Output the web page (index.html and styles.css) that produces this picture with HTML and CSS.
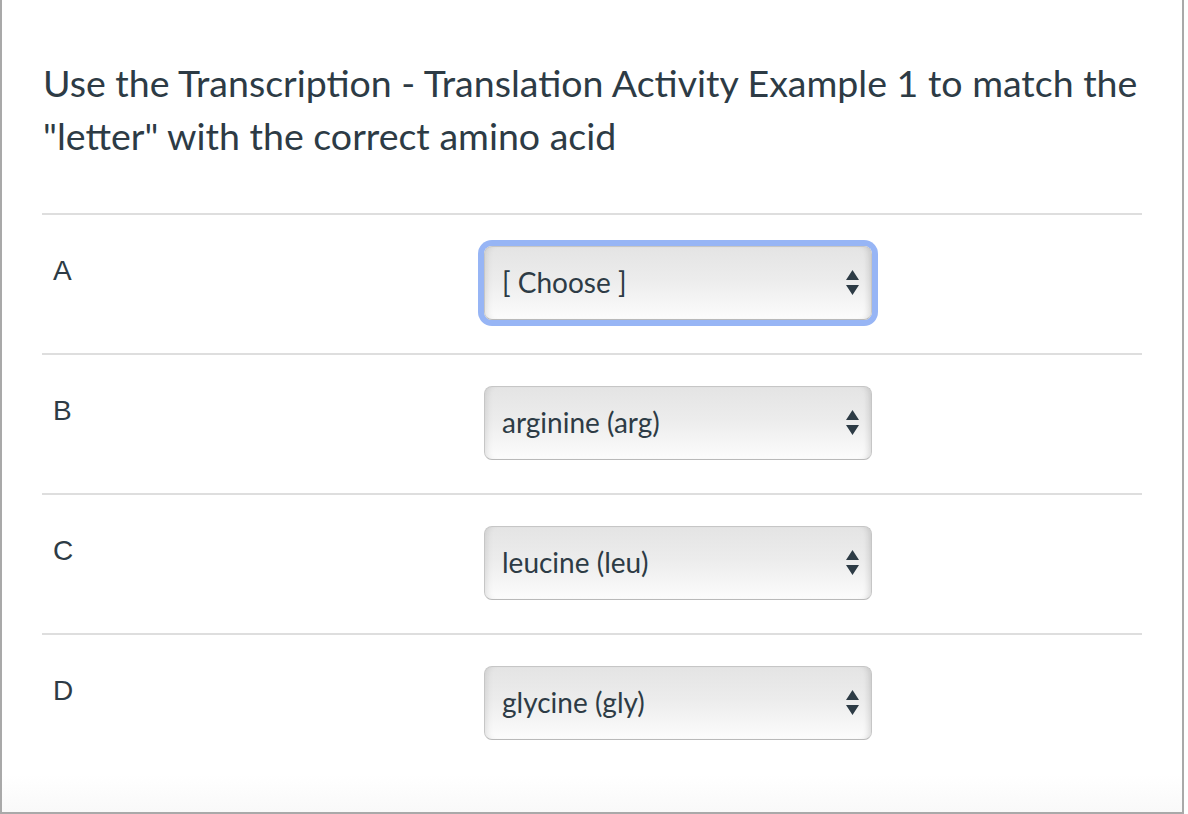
FILE: index.html
```html
<!DOCTYPE html>
<html lang="en">
<head>
<meta charset="utf-8">
<title>Matching question</title>
<link rel="stylesheet" href="styles.css">
</head>
<body>
<div class="frame">
  <div class="question">
    <p class="question-text">Use the Transcription - Translation Activity Example 1 to match the "letter" with the correct amino acid</p>
    <div class="answers">
      <div class="answer">
        <div class="label">A</div>
        <div class="pick-wrap focused">
          <select class="pick"><option>[ Choose ]</option></select>
          <svg class="arrows" width="13" height="26" viewBox="0 0 13 26"><path d="M6.5 0 L13 10 L0 10 Z M0 15 L13 15 L6.5 25 Z" fill="#2d3b45"/></svg>
        </div>
      </div>
      <div class="answer">
        <div class="label">B</div>
        <div class="pick-wrap">
          <select class="pick"><option>arginine (arg)</option></select>
          <svg class="arrows" width="13" height="26" viewBox="0 0 13 26"><path d="M6.5 0 L13 10 L0 10 Z M0 15 L13 15 L6.5 25 Z" fill="#2d3b45"/></svg>
        </div>
      </div>
      <div class="answer">
        <div class="label">C</div>
        <div class="pick-wrap">
          <select class="pick"><option>leucine (leu)</option></select>
          <svg class="arrows" width="13" height="26" viewBox="0 0 13 26"><path d="M6.5 0 L13 10 L0 10 Z M0 15 L13 15 L6.5 25 Z" fill="#2d3b45"/></svg>
        </div>
      </div>
      <div class="answer">
        <div class="label">D</div>
        <div class="pick-wrap">
          <select class="pick"><option>glycine (gly)</option></select>
          <svg class="arrows" width="13" height="26" viewBox="0 0 13 26"><path d="M6.5 0 L13 10 L0 10 Z M0 15 L13 15 L6.5 25 Z" fill="#2d3b45"/></svg>
        </div>
      </div>
    </div>
  </div>
</div>
</body>
</html>
```

FILE: styles.css
```css
html, body {
  margin: 0;
  padding: 0;
  background: #ffffff;
}

.frame {
  box-sizing: border-box;
  width: 1184px;
  height: 814px;
  border: 2px solid #a9a9a9;
  border-top: none;
  background: linear-gradient(to bottom, #ffffff 0, #ffffff 775px, #f9f9f9 812px);
  color: #2d3b45;
  overflow: hidden;
}

.question {
  padding: 56px 40px 0 40px;
}

.question-text {
  margin: 0 0 51px 0;
  font-family: Lato, "Open Sans", sans-serif;
  font-size: 37.5px;
  line-height: 53px;
  padding-left: 1px;
}

.answers {
  display: flex;
  flex-direction: column;
}

.answer {
  display: grid;
  grid-template-columns: 442px 388px 1fr;
  height: 140px;
  box-sizing: border-box;
  border-top: 2px solid #dedede;
  align-items: center;
}

.label {
  align-self: start;
  padding: 40px 0 0 11px;
  font-family: "Liberation Sans", Arial, sans-serif;
  font-size: 28px;
  line-height: 32px;
}

.pick-wrap {
  position: relative;
  width: 388px;
  height: 74px;
  margin-top: -2px;
  border-radius: 8px;
}

.pick-wrap.focused {
  box-shadow: 0 0 0 6px #97b5f5;
}

.pick {
  -webkit-appearance: none;
  appearance: none;
  box-sizing: border-box;
  width: 388px;
  height: 74px;
  margin: 0;
  padding: 0 40px 3px 17px;
  border: 1px solid #c6c6c6;
  border-bottom-color: #b9b9b9;
  border-radius: 8px;
  background: linear-gradient(to bottom, #e4e4e4 0%, #ececec 45%, #fcfcfc 100%);
  box-shadow: inset 7px 0 6px -5px rgba(0, 0, 0, 0.10), inset -7px 0 6px -5px rgba(0, 0, 0, 0.14);
  color: #2d3b45;
  font-family: Lato, "Open Sans", sans-serif;
  font-size: 28px;
  outline: none;
}

.arrows {
  position: absolute;
  right: 13px;
  top: 24px;
  pointer-events: none;
}
```
